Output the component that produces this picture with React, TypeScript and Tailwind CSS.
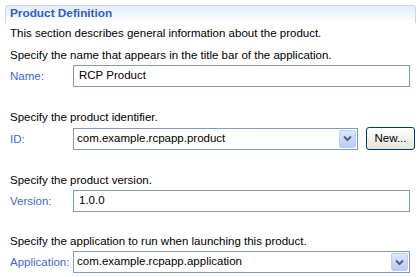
import React from 'react';

const font = { fontFamily: '"Liberation Sans", Arial, sans-serif' };

const Chevron: React.FC = () => (
  <svg width="9" height="7" viewBox="0 0 9 7">
    <path d="M1 1.5 L4.5 5 L8 1.5" fill="none" stroke="#4d6185" strokeWidth="2" />
  </svg>
);

const Combo: React.FC<{ value: string; className?: string }> = ({ value, className }) => (
  <div className={`h-[22px] border border-[#7f9db9] bg-white flex items-center ${className ?? ''}`}>
    <span className="flex-1 pl-[3px] text-[11.5px] text-black truncate">{value}</span>
    <div className="w-[17px] h-[18px] mr-[1px] rounded-[2px] border border-[#bccdf9] bg-gradient-to-b from-[#dde6fd] to-[#b8cbf7] flex items-center justify-center">
      <Chevron />
    </div>
  </div>
);

const Field: React.FC<{ value: string }> = ({ value }) => (
  <div className="h-[22px] w-[337px] border border-[#7f9db9] bg-white flex items-center pl-[5px] text-[11.5px] text-black">
    {value}
  </div>
);

const Label: React.FC<{ children: React.ReactNode }> = ({ children }) => (
  <div className="w-[63px] text-[11.5px] text-[#3a6ad4] leading-[14px]">{children}</div>
);

const Hint: React.FC<{ children: React.ReactNode; className?: string }> = ({ children, className }) => (
  <div className={`pl-[10px] text-[11.5px] leading-[14px] text-black ${className ?? ''}`}>{children}</div>
);

export default function App() {
  return (
    <div className="w-[419px] h-[277px] bg-white overflow-hidden" style={font}>
      <div className="pt-[5px] pl-[5px] pr-[3px]">
        <div className="h-[18px] rounded-t-[3px] border-t border-l border-r border-[#c8d6f2] bg-gradient-to-b from-[#e4ebfb] to-white flex items-start pl-[4px]">
          <span className="text-[11.8px] leading-[14px] font-bold text-[#2d5fc4]">Product Definition</span>
        </div>
      </div>

      <Hint className="mt-[3px]">This section describes general information about the product.</Hint>

      <Hint className="mt-[8px]">Specify the name that appears in the title bar of the application.</Hint>
      <div className="mt-[3px] pl-[10px] flex items-center">
        <Label>Name:</Label>
        <Field value="RCP Product" />
      </div>

      <Hint className="mt-[23px]">Specify the product identifier.</Hint>
      <div className="mt-[3px] pl-[10px] flex items-center">
        <Label>ID:</Label>
        <Combo value="com.example.rcpapp.product" className="w-[285px]" />
        <button className="ml-[8px] h-[23px] w-[49px] rounded-[3px] border border-[#003c74] bg-gradient-to-b from-white to-[#e6e4da] text-[11.5px] text-black leading-none">
          New...
        </button>
      </div>

      <Hint className="mt-[23px]">Specify the product version.</Hint>
      <div className="mt-[3px] pl-[10px] flex items-center">
        <Label>Version:</Label>
        <Field value="1.0.0" />
      </div>

      <Hint className="mt-[22px]">Specify the application to run when launching this product.</Hint>
      <div className="mt-[3px] pl-[10px] flex items-center">
        <Label>Application:</Label>
        <Combo value="com.example.rcpapp.application" className="w-[337px]" />
      </div>
    </div>
  );
}
